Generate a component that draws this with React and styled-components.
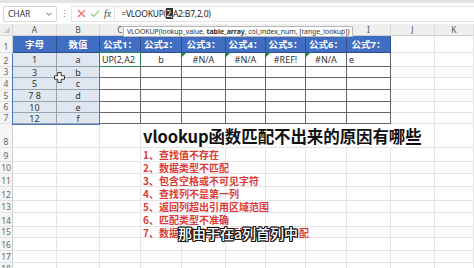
import React from "react";
import styled, { createGlobalStyle, css } from "styled-components";

const GlobalStyle = createGlobalStyle`
  body {
    margin: 0;
    background: #fff;
    font-family: "Noto Sans", "Noto Sans CJK SC", sans-serif;
  }
`;

const COLS = ["A", "B", "C", "D", "E", "F", "G", "H", "I", "J", "K"];
const ROW_HEIGHTS = [17, 14, 11, 12, 12, 11, 11, 24, 14, 12, 13, 14, 12, 14, 11, 13, 12, 12];
const TABLE_LAST_COL = 8; // column I
const NOTE_COL = 3; // column D holds the title and the list

const header = ["字母", "数值", "公式1：", "公式2：", "公式3：", "公式4：", "公式5：", "公式6：", "公式7："];
const letters = ["1", "3", "5", "7 8", "10", "12"];
const values = ["a", "b", "c", "d", "e", "f"];
const row2 = [null, null, "UP(2,A2", "b", "#N/A", "#N/A", "#REF!", "#N/A", "e"];
const flagged = [4, 5, 6, 7];

const reasons = [
  "1、查找值不存在",
  "2、数据类型不匹配",
  "3、包含空格或不可见字符",
  "4、查找列不是第一列",
  "5、返回列超出引用区域范围",
  "6、匹配类型不准确",
  "7、数据中存在重复项导致错误的匹配",
];

// grid line 1 is the header row / header column, so sheet row n sits on line n + 2
const at = (p) => css`
  grid-row: ${p.$r + 2};
  grid-column: ${p.$c + 2};
`;

export default function App() {
  const rows = ROW_HEIGHTS.map((_, r) => {
    const rowNo = r + 1;
    return COLS.map((_, c) => {
      const inTable = rowNo <= 7 && c <= TABLE_LAST_COL;
      const pos = { key: `${rowNo}-${c}`, $r: rowNo - 1, $c: c };
      if (rowNo === 1 && inTable) {
        return (
          <Cell {...pos} $kind="head" $dark>
            {header[c]}
          </Cell>
        );
      }
      if (rowNo >= 2 && rowNo <= 7 && c <= 1) {
        return (
          <Cell {...pos} $kind="key" $dark>
            {c === 0 ? letters[rowNo - 2] : values[rowNo - 2]}
          </Cell>
        );
      }
      if (rowNo === 2 && inTable) {
        return (
          <Cell
            {...pos}
            $dark
            $flag={flagged.includes(c)}
            $align={c === 2 || c === 8 ? "left" : "center"}
          >
            {row2[c]}
          </Cell>
        );
      }
      if (rowNo === 8 && c === NOTE_COL) {
        return (
          <Cell {...pos} $overflow>
            <Title>vlookup函数匹配不出来的原因有哪些</Title>
          </Cell>
        );
      }
      if (rowNo >= 9 && rowNo <= 15 && c === NOTE_COL) {
        return (
          <Cell {...pos} $overflow>
            <Reason>{reasons[rowNo - 9]}</Reason>
          </Cell>
        );
      }
      return (
        <Cell {...pos} $dark={inTable} $plain={rowNo === 8 && c > NOTE_COL && c < 9} />
      );
    });
  });

  return (
    <Page>
      <GlobalStyle />
      <TopStrip />
      <FormulaBar>
        <NameBox>
          <span>CHAR</span>
          <Chevron viewBox="0 0 8 8">
            <path d="M1.5 2.8 L4 5.3 L6.5 2.8" fill="none" stroke="#555" strokeWidth="0.9" />
          </Chevron>
        </NameBox>
        <Dots>⋮</Dots>
        <ActionBox>
          <svg width="9" height="9" viewBox="0 0 9 9">
            <path d="M1 1 L8 8 M8 1 L1 8" stroke="#e26a6a" strokeWidth="1.1" />
          </svg>
          <svg width="10" height="9" viewBox="0 0 10 9">
            <path d="M1 4.8 L3.8 7.5 L9 1.5" fill="none" stroke="#7cc27c" strokeWidth="1.1" />
          </svg>
          <Fx>fx</Fx>
        </ActionBox>
        <FormulaInput>
          =VLOOKUP(<Picked>2,</Picked>A2:B7,2,0)
        </FormulaInput>
      </FormulaBar>

      <Sheet>
        <Corner>
          <svg width="6" height="6" viewBox="0 0 6 6">
            <path d="M6 0 L6 6 L0 6 Z" fill="#c8c8c8" />
          </svg>
        </Corner>
        {COLS.map((l, c) => (
          <ColHead key={l} $c={c}>
            {l}
          </ColHead>
        ))}
        {ROW_HEIGHTS.map((_, r) => (
          <RowHead key={r} $r={r}>
            {r + 1}
          </RowHead>
        ))}
        {rows}
        <RangeOutline />
        <ActiveCell />
        <Tooltip>
          VLOOKUP(lookup_value, <b>table_array</b>, col_index_num, [range_lookup])
        </Tooltip>
      </Sheet>

      <Subtitle>那由于在a列首列中</Subtitle>
      <Cursor viewBox="0 0 11 11">
        <path
          d="M3.8 0.5 H7.2 V3.8 H10.5 V7.2 H7.2 V10.5 H3.8 V7.2 H0.5 V3.8 H3.8 Z"
          fill="#fff"
          stroke="#222"
          strokeWidth="0.9"
        />
      </Cursor>
    </Page>
  );
}

const Page = styled.div`
  position: relative;
  width: 474px;
  height: 268px;
  overflow: hidden;
  background: #fff;
`;

const TopStrip = styled.div`
  height: 3px;
  background: #e4e4e4;
`;

const FormulaBar = styled.div`
  display: flex;
  align-items: center;
  height: 21px;
  padding-left: 3px;
  background: #fff;
  font-size: 8.5px;
  color: #333;
`;

const NameBox = styled.div`
  box-sizing: border-box;
  display: flex;
  align-items: center;
  justify-content: space-between;
  width: 54px;
  height: 16px;
  padding: 0 3px 0 4px;
  border: 1px solid #d6d6d6;
  border-radius: 2px;
  font-size: 8.5px;
  color: #333;
`;

const Chevron = styled.svg`
  width: 8px;
  height: 8px;
`;

const Dots = styled.span`
  width: 14px;
  text-align: center;
  color: #888;
  font-size: 9px;
`;

const ActionBox = styled.div`
  box-sizing: border-box;
  display: flex;
  align-items: center;
  gap: 4px;
  height: 16px;
  padding: 0 3px 0 5px;
  border: 1px solid #e2e2e2;
  border-right: none;
  border-radius: 2px 0 0 2px;
`;

const Fx = styled.span`
  font-family: "Liberation Serif", serif;
  font-style: italic;
  font-size: 10px;
  color: #444;
`;

const FormulaInput = styled.div`
  box-sizing: border-box;
  flex: 1;
  display: flex;
  align-items: center;
  height: 16px;
  padding-left: 6px;
  border: 1px solid #e2e2e2;
  border-right: none;
  font-size: 8.5px;
  letter-spacing: -0.2px;
  color: #222;
  white-space: pre;
`;

const Picked = styled.span`
  background: #333;
  color: #fff;
`;

const Sheet = styled.div`
  position: relative;
  display: grid;
  grid-template-columns: 13px 44px 43px 41px 41px 44px 40px 40px 41px 44px 44px 1fr;
  grid-template-rows: 12px ${ROW_HEIGHTS.map((h) => `${h}px`).join(" ")};
  font-size: 9px;
`;

const Corner = styled.div`
  grid-row: 1;
  grid-column: 1;
  display: flex;
  align-items: flex-end;
  justify-content: flex-end;
  padding: 0 2px 2px 0;
  background: #efefef;
  border-right: 1px solid #d8d8d8;
  border-bottom: 1px solid #d8d8d8;
`;

const ColHead = styled.div`
  grid-row: 1;
  grid-column: ${(p) => p.$c + 2};
  box-sizing: border-box;
  display: flex;
  align-items: center;
  justify-content: center;
  background: #efefef;
  border-right: 1px solid #dcdcdc;
  border-bottom: 1px solid #cfcfcf;
  color: #555;
  font-size: 8.5px;
`;

const RowHead = styled.div`
  grid-row: ${(p) => p.$r + 2};
  grid-column: 1;
  box-sizing: border-box;
  display: flex;
  align-items: flex-end;
  justify-content: center;
  background: #f6f6f6;
  border-right: 1px solid #cfcfcf;
  border-bottom: 1px solid #e2e2e2;
  color: #666;
  font-size: 8.5px;
  line-height: 10px;
`;

const Cell = styled.div`
  ${at}
  box-sizing: border-box;
  position: relative;
  display: flex;
  align-items: center;
  justify-content: ${(p) => (p.$align === "left" ? "flex-start" : "center")};
  padding: 0 2px;
  overflow: hidden;
  white-space: nowrap;
  font-size: 9px;
  color: #333;
  border-right: 1px solid ${(p) => (p.$dark ? "#666" : "#e4e4e4")};
  border-bottom: 1px solid ${(p) => (p.$dark ? "#666" : "#e4e4e4")};

  ${(p) =>
    p.$kind === "head" &&
    css`
      background: #3f6ec2;
      border-color: #2f4f86;
      color: #fff;
      font-weight: 700;
      font-size: 9.5px;
    `}

  ${(p) =>
    p.$kind === "key" &&
    css`
      background: #dfe7f1;
      border-color: #9aa4b0;
      color: #333;
    `}

  ${(p) =>
    p.$plain &&
    css`
      border-right-color: transparent;
    `}

  ${(p) =>
    p.$overflow &&
    css`
      overflow: visible;
      z-index: 1;
      justify-content: flex-start;
      border-right-color: transparent;
    `}

  ${(p) =>
    p.$flag &&
    css`
      &::before {
        content: "";
        position: absolute;
        left: 0;
        top: 0;
        border-top: 4px solid #1e8a3c;
        border-right: 4px solid transparent;
      }
    `}
`;

const Title = styled.span`
  font-family: "Noto Sans CJK SC", sans-serif;
  font-weight: 700;
  font-size: 16.5px;
  color: #111;
  letter-spacing: -0.1px;
`;

const Reason = styled.span`
  font-family: "Noto Sans CJK SC", sans-serif;
  font-weight: 700;
  font-size: 10px;
  color: #dd3a33;
`;

const RangeOutline = styled.div`
  grid-column: 2 / 4;
  grid-row: 3 / 9;
  margin: 0 0 -1px -1px;
  border: 1px solid #4a78c6;
  border-top-color: transparent;
  pointer-events: none;
  z-index: 2;
`;

const ActiveCell = styled.div`
  grid-column: 4 / 5;
  grid-row: 3 / 4;
  border: 1px solid #2e8b57;
  margin: -1px 0 0 -1px;
  pointer-events: none;
  z-index: 2;
`;

const Tooltip = styled.div`
  position: absolute;
  left: 123px;
  top: 2px;
  box-sizing: border-box;
  height: 11px;
  padding: 0 3px;
  display: flex;
  align-items: center;
  background: #fff;
  border: 1px solid #b8b8b8;
  font-size: 7px;
  color: #333;
  white-space: nowrap;
  letter-spacing: -0.1px;
  z-index: 3;

  b {
    font-weight: 700;
    margin-left: 2px;
  }
`;

const Subtitle = styled.div`
  position: absolute;
  left: 178px;
  top: 224px;
  font-family: "Noto Sans CJK SC", sans-serif;
  font-weight: 500;
  font-size: 14px;
  line-height: 18px;
  color: #fff;
  z-index: 3;
  text-shadow:
    1px 0 0 #111, -1px 0 0 #111, 0 1px 0 #111, 0 -1px 0 #111,
    1px 1px 0 #111, -1px -1px 0 #111, 1px -1px 0 #111, -1px 1px 0 #111;
`;

const Cursor = styled.svg`
  position: absolute;
  left: 54px;
  top: 72px;
  width: 11px;
  height: 11px;
  z-index: 3;
`;
